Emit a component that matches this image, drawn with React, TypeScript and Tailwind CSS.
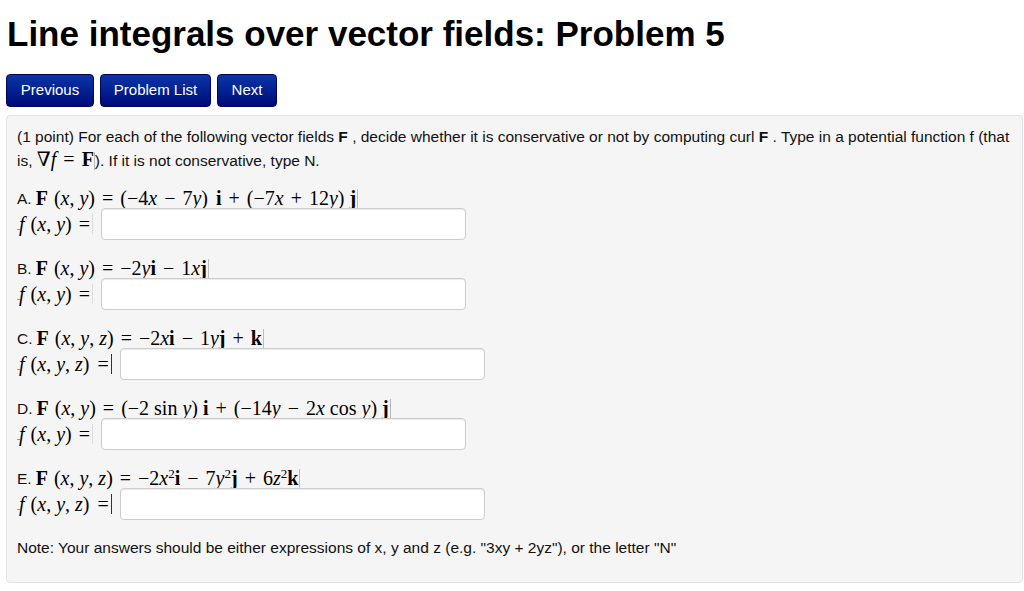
import React from "react";

const serif = { fontFamily: '"Liberation Serif", "DejaVu Serif", serif' };

function V({ children }: { children: React.ReactNode }) {
  return <span className="italic">{children}</span>;
}

function B({ children }: { children: React.ReactNode }) {
  return <span className="font-bold">{children}</span>;
}

function Op({ children }: { children: React.ReactNode }) {
  return <span className="mx-[7px]">{children}</span>;
}

function Math({ children, bar = true }: { children: React.ReactNode; bar?: boolean }) {
  return (
    <span className="text-[20px] text-black whitespace-nowrap" style={serif}>
      {children}
      {bar && <span className="inline-block w-px h-[20px] align-[-4px] bg-[#bbb] ml-[1px]" />}
    </span>
  );
}

function Args({ z }: { z?: boolean }) {
  return (
    <>
      <span className="ml-[6px]">(</span>
      <V>x</V>, <V>y</V>
      {z && (
        <>
          , <V>z</V>
        </>
      )}
      )
    </>
  );
}

function Row({ label, eq, z }: { label: string; eq: React.ReactNode; z?: boolean }) {
  return (
    <div className="mt-[18px] first:mt-[16px]">
      <div className="h-[20px] flex items-center">
        <span className="mr-[4px]">{label}</span>
        <Math>
          <B>F</B>
          <Args z={z} />
          <Op>=</Op>
          {eq}
        </Math>
      </div>
      <div className="flex items-center h-[32px]">
        <Math bar={false}>
          <span className="inline-block w-[3px] h-px bg-[#999] align-[1px] mr-[-1px]" />
          <V>f</V>
          <Args z={z} />
          <span className={z ? "ml-[8px]" : "ml-[7px]"}>=</span>
        </Math>
        <span className={`inline-block w-px h-[20px] ml-[2px] ${z ? "bg-[#333]" : "bg-[#ddd]"}`} />
        <input
          type="text"
          className="ml-[8px] h-[32px] w-[365px] bg-white border border-[#ccc] rounded-[4px] shadow-[inset_0_1px_1px_rgba(0,0,0,0.08)]"
        />
      </div>
    </div>
  );
}

function NavButton({ children, w }: { children: React.ReactNode; w: string }) {
  return (
    <button
      className={`${w} h-[33px] rounded-[4px] border border-[#02035a] bg-gradient-to-b from-[#0d34a6] to-[#00087a] text-white text-[15px]`}
    >
      {children}
    </button>
  );
}

export default function App() {
  return (
    <div
      className="min-h-screen bg-white text-[#111] pl-[6px] pr-[1px] pt-[14px]"
      style={{ fontFamily: '"Liberation Sans", Arial, sans-serif' }}
    >
      <h1 className="text-[35px] leading-[40px] font-bold text-black pl-[1px]">
        Line integrals over vector fields: Problem 5
      </h1>
      <div className="flex gap-[6px] mt-[20px]">
        <NavButton w="w-[88px]">Previous</NavButton>
        <NavButton w="w-[111px]">Problem List</NavButton>
        <NavButton w="w-[60px]">Next</NavButton>
      </div>
      <div className="mt-[8px] bg-[#f5f5f5] border border-[#e3e3e3] rounded-[4px] pl-[10px] pr-[6px] pt-[9px] pb-[23px] text-[15.5px] leading-[23px]">
        <p>
          <span className="whitespace-nowrap">
            (1 point) For each of the following vector fields <b>F</b> , decide whether it is conservative or not by
            computing curl <b>F</b> . Type in a potential function f (that
          </span>
          <br />
          is,{" "}
          <Math bar={false}>
            ∇<V>f</V>
            <Op>=</Op>
            <B>F</B>
          </Math>
          <span className="inline-block w-px h-[18px] align-[-4px] bg-[#bbb]" />
          ). If it is not conservative, type N.
        </p>

        <div>
          <Row
            label="A."
            eq={
              <>
                (−4<V>x</V>
                <Op>−</Op>7<V>y</V>)<span className="ml-[3px]" /> <B>i</B>
                <Op>+</Op>(−7<V>x</V>
                <Op>+</Op>12<V>y</V>) <B>j</B>
              </>
            }
          />
          <Row
            label="B."
            eq={
              <>
                −2<V>y</V>
                <B>i</B>
                <Op>−</Op>1<V>x</V>
                <B>j</B>
              </>
            }
          />
          <Row
            label="C."
            z
            eq={
              <>
                −2<V>x</V>
                <B>i</B>
                <Op>−</Op>1<V>y</V>
                <B>j</B>
                <Op>+</Op>
                <B>k</B>
              </>
            }
          />
          <Row
            label="D."
            eq={
              <>
                (−2 sin <V>y</V>) <B>i</B>
                <Op>+</Op>(−14<V>y</V>
                <Op>−</Op>2<V>x</V> cos <V>y</V>) <B>j</B>
              </>
            }
          />
          <Row
            label="E."
            z
            eq={
              <>
                −2<V>x</V>
                <sup className="text-[13px]">2</sup>
                <B>i</B>
                <Op>−</Op>7<V>y</V>
                <sup className="text-[13px]">2</sup>
                <B>j</B>
                <Op>+</Op>6<V>z</V>
                <sup className="text-[13px]">2</sup>
                <B>k</B>
              </>
            }
          />
        </div>

        <p className="mt-[16px]">
          Note: Your answers should be either expressions of x, y and z (e.g. "3xy + 2yz"), or the letter "N"
        </p>
      </div>
    </div>
  );
}
